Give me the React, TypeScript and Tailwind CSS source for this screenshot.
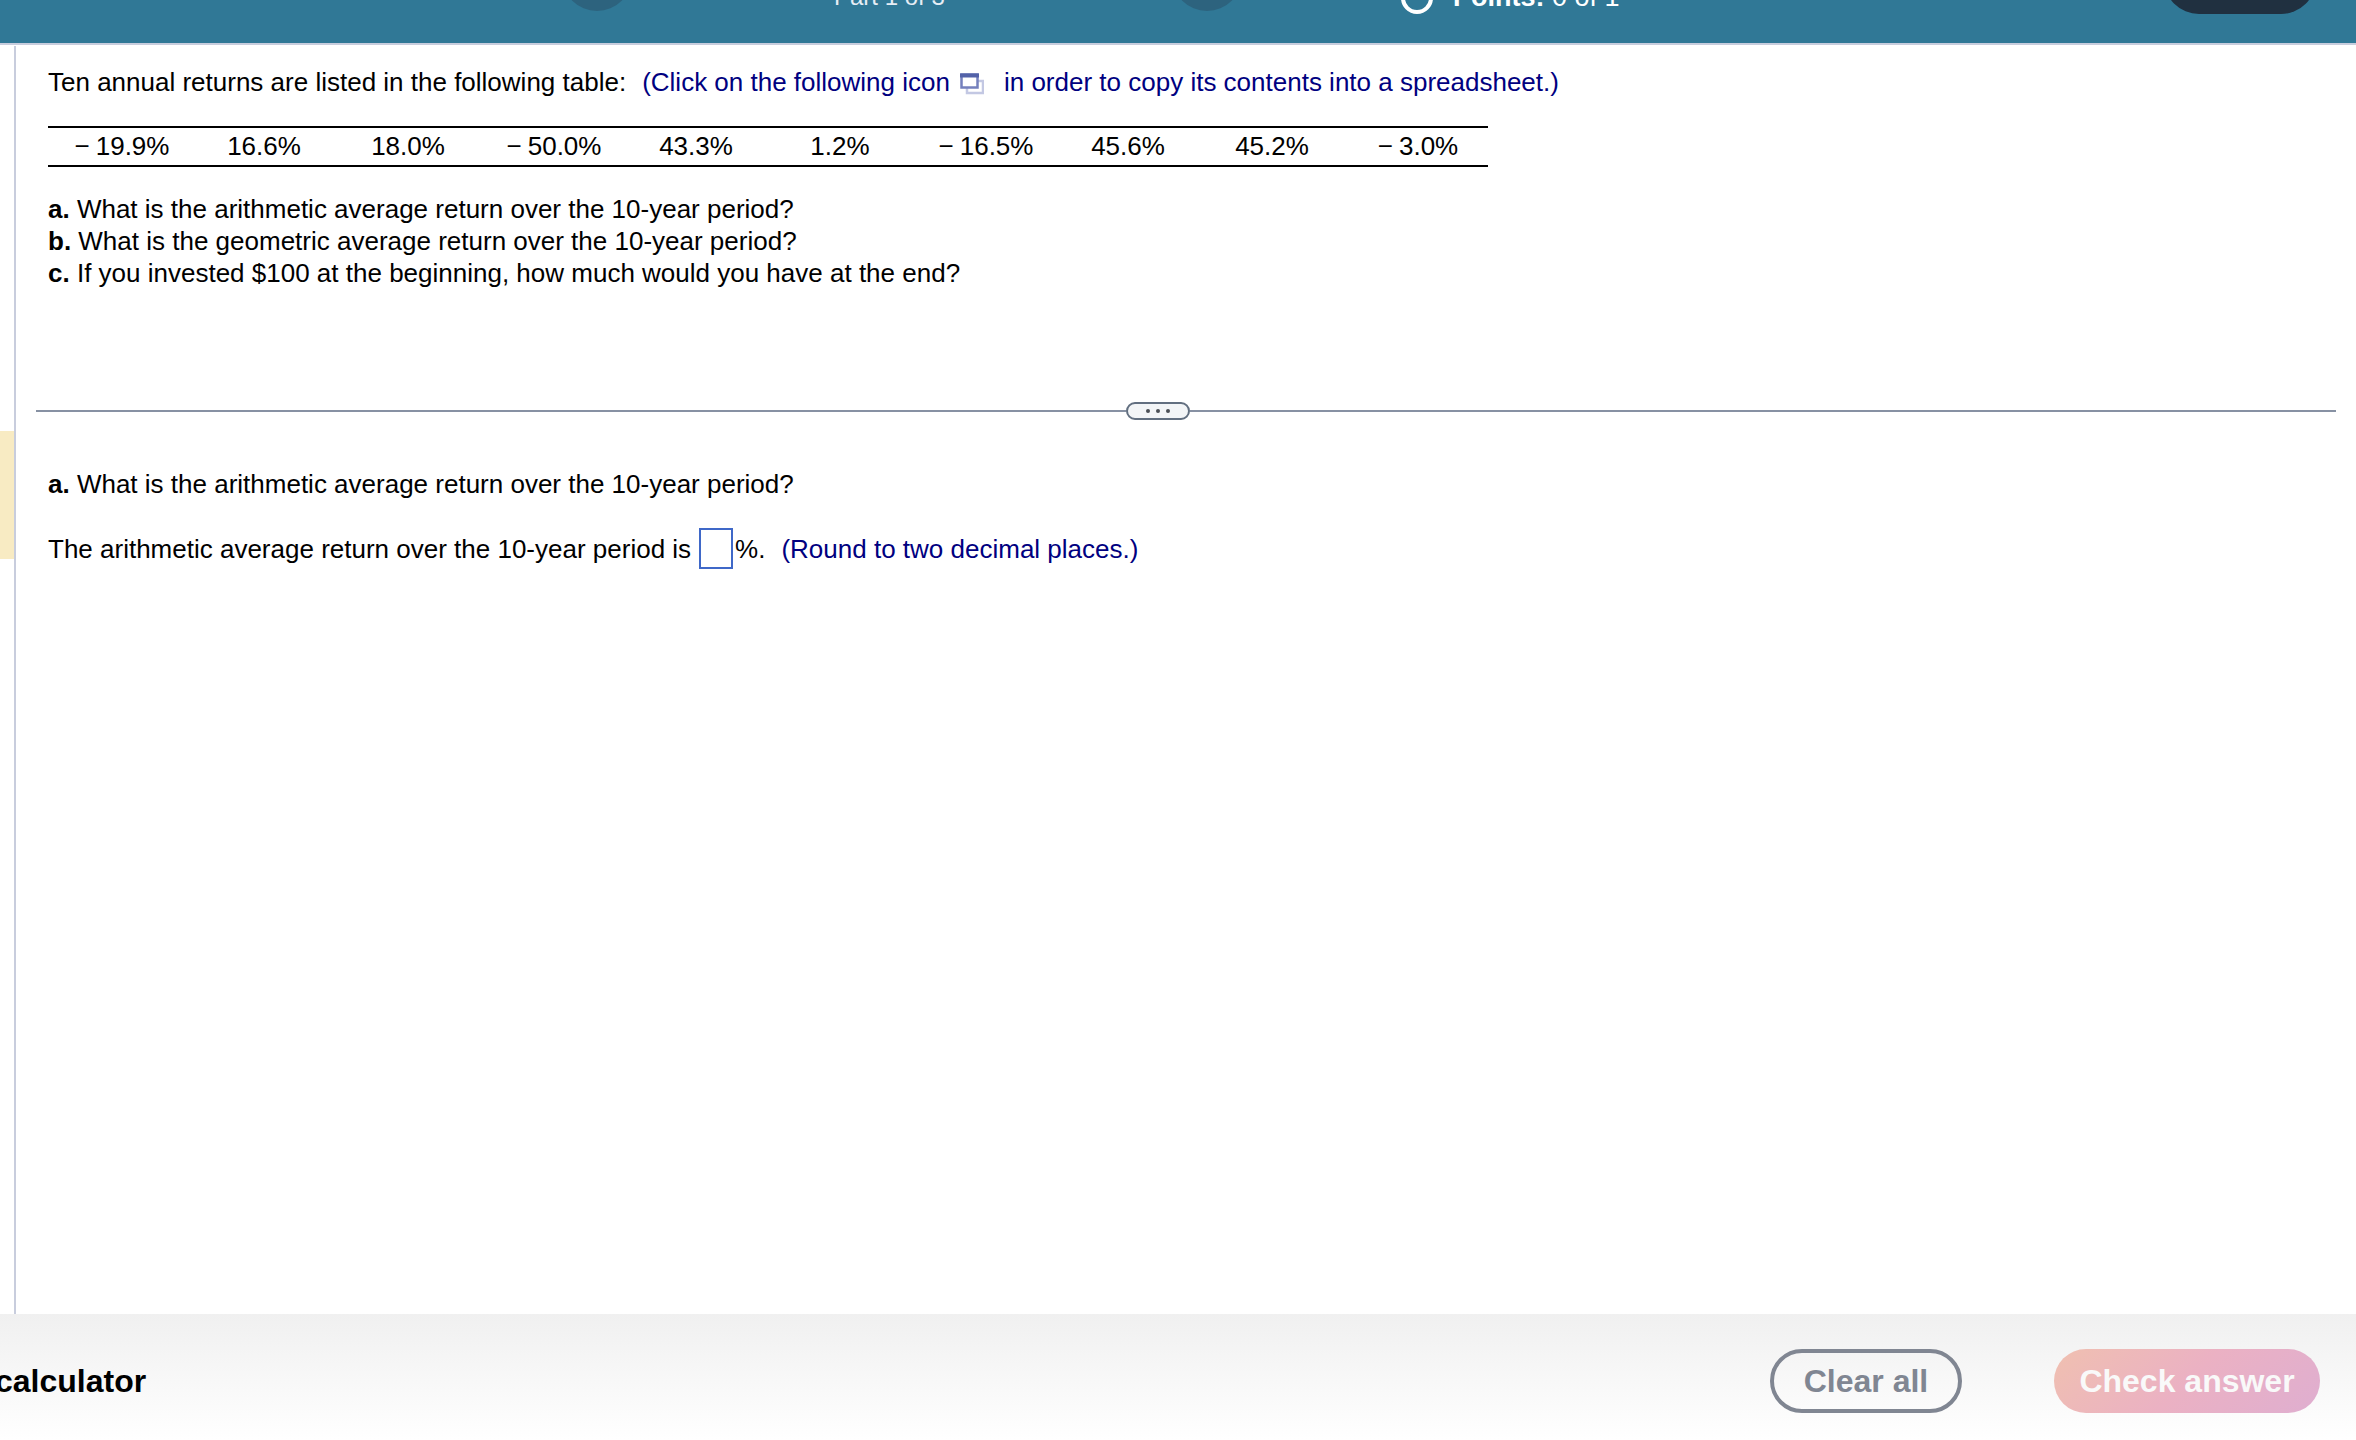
import { useState } from "react";

const returns = [-19.9, 16.6, 18.0, -50.0, 43.3, 1.2, -16.5, 45.6, 45.2, -3.0];

function Header() {
  return (
    <header className="h-[45px] shrink-0 overflow-hidden border-b-2 border-[#c8cddd] bg-[#307896] text-white">
      <div className="-mt-14 flex h-[70px] items-end pr-10 leading-7">
        <button
          aria-label="Previous part"
          className="mb-[3px] ml-[562px] size-[70px] shrink-0 rounded-full bg-[#2d637e]"
        />
        <span className="mb-[3px] ml-[202px] w-[338px] shrink-0 text-2xl leading-7 text-[#e6edf5]">Part 1 of 3</span>
        <button aria-label="Next part" className="mb-[3px] size-[70px] shrink-0 rounded-full bg-[#2d637e]" />
        <span className="ml-[159px] size-8 shrink-0 rounded-full border-4 border-white" />
        <p className="mb-[3px] ml-5 whitespace-nowrap text-[27px]">
          <b>Points:</b> 0 of 1
        </p>
        <button aria-label="Save" className="ml-auto h-[70px] w-[152px] shrink-0 rounded-full bg-[#203040]" />
      </div>
    </header>
  );
}

function CopyIcon() {
  return (
    <svg width="24" height="22" viewBox="0 0 24 22" fill="none">
      <path d="M18 8h5v12H7v-5" stroke="#c3c8e3" strokeWidth="2.5" />
      <rect x="1.5" y="1.5" width="16" height="13" fill="#fff" stroke="#7480bd" strokeWidth="2.5" />
      <path d="M0 2.5h19" stroke="#5362a8" strokeWidth="4" />
    </svg>
  );
}

function ReturnsTable() {
  return (
    <table className="mt-7 w-[1440px] table-fixed border-y-2 border-black text-center">
      <tbody>
        <tr>
          {returns.map((value) => (
            <td key={value} className={value < 0 ? "h-[39px] p-0 pb-0.5 pl-1" : "h-[39px] p-0 pb-0.5"}>
              {value < 0 && <span className="mr-1.5">−</span>}
              {Math.abs(value).toFixed(1)}%
            </td>
          ))}
        </tr>
      </tbody>
    </table>
  );
}

function Divider() {
  return (
    <div className="mt-[113px] ml-5 mr-5 flex items-center">
      <div className="h-0.5 w-[1090px] bg-[#8791a3]" />
      <button
        aria-label="Resize panels"
        className="flex h-[18px] w-16 shrink-0 items-center justify-center gap-1.5 rounded-full border-2 border-[#626f80] bg-[#f3f5f7]"
      >
        <span className="size-1 rounded-full bg-[#4b4f55]" />
        <span className="size-1 rounded-full bg-[#4b4f55]" />
        <span className="size-1 rounded-full bg-[#4b4f55]" />
      </button>
      <div className="h-0.5 flex-1 bg-[#8791a3]" />
    </div>
  );
}

export default function App() {
  const [answer, setAnswer] = useState("");

  return (
    <div className="flex min-h-screen flex-col overflow-x-hidden bg-white font-['Liberation_Sans',Arial,sans-serif] text-black">
      <Header />

      <div className="flex flex-1">
        <aside className="w-3.5 shrink-0 pt-[386px]">
          <div className="h-32 bg-[#f8ebc3]" />
        </aside>

        <main className="mt-px flex-1 border-l-2 border-[#c8cddd] text-[26px] leading-8">
          <section className="px-8 pt-5">
            <div className="flex items-center whitespace-nowrap">
              <span>Ten annual returns are listed in the following table:</span>
              <span className="ml-4 text-[#000080]">(Click on the following icon</span>
              <button aria-label="Copy table" className="ml-2.5 pt-1">
                <CopyIcon />
              </button>
              <span className="ml-5 text-[#000080]">
                in order to copy its contents into a spreadsheet.)
              </span>
            </div>
            <ReturnsTable />
            <div className="mt-[26px]">
              <p>
                <b>a.</b> What is the arithmetic average return over the 10-year period?
              </p>
              <p>
                <b>b.</b> What is the geometric average return over the 10-year period?
              </p>
              <p>
                <b>c.</b> If you invested $100 at the beginning, how much would you have at the end?
              </p>
            </div>
          </section>

          <Divider />

          <section className="px-8 pt-12">
            <p>
              <b>a.</b> What is the arithmetic average return over the 10-year period?
            </p>
            <div className="mt-7 flex items-center whitespace-nowrap">
              <label htmlFor="answer">The arithmetic average return over the 10-year period is</label>
              <input
                id="answer"
                value={answer}
                onChange={(e) => setAnswer(e.target.value)}
                className="ml-2 mr-0.5 h-[41px] w-[34px] border-2 border-[#3f68c8] bg-white text-center outline-none"
              />
              <span>%.</span>
              <span className="ml-4 text-[#000080]">(Round to two decimal places.)</span>
            </div>
          </section>
        </main>
      </div>

      <footer className="flex h-[126px] shrink-0 items-center bg-linear-to-b from-[#f0f0f0] to-white pt-2 pr-9 text-[32px] font-bold">
        <a href="#calculator" className="-ml-[5px]">calculator</a>
        <button className="ml-auto h-16 w-48 rounded-full border-4 border-[#808692] text-[#808692]">
          Clear all
        </button>
        <button className="ml-[92px] h-16 w-[266px] rounded-full bg-linear-135 from-[#f0c0b0] via-[#ebb1c3] to-[#dfaed0] text-[#f9f9f9]">
          Check answer
        </button>
      </footer>
    </div>
  );
}
